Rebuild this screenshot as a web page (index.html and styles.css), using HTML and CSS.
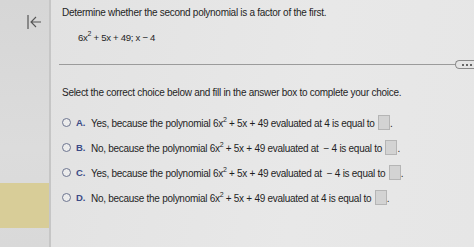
FILE: index.html
```html
<!DOCTYPE html>
<html>
<head>
<meta charset="utf-8">
<link rel="stylesheet" href="styles.css">
</head>
<body>
<div class="page">
  <aside class="side">
    <div class="back">
      <svg width="16" height="16" viewBox="0 0 16 16"><path d="M2 1V15" stroke="#555" stroke-width="1.2" fill="none"/><path d="M15 8H5M10 3L5 8L10 13" stroke="#555" stroke-width="1.1" fill="none"/></svg>
    </div>
    <div class="hl"></div>
  </aside>
  <main class="main">
    <p class="q">Determine whether the second polynomial is a factor of the first.</p>
    <p class="poly">6x<sup>2</sup> + 5x + 49; x − 4</p>
    <div class="rule"><span class="line"></span><span class="pill"><i></i><i></i><i></i></span></div>
    <p class="sel">Select the correct choice below and fill in the answer box to complete your choice.</p>
    <ul class="opts">
      <li><span class="radio"></span><b>A.</b><span class="txt">Yes, because the polynomial 6x<sup>2</sup> + 5x + 49 evaluated at 4 is equal to <span class="box"></span>.</span></li>
      <li><span class="radio"></span><b>B.</b><span class="txt">No, because the polynomial 6x<sup>2</sup> + 5x + 49 evaluated at &nbsp;− 4 is equal to <span class="box"></span>.</span></li>
      <li><span class="radio"></span><b>C.</b><span class="txt">Yes, because the polynomial 6x<sup>2</sup> + 5x + 49 evaluated at &nbsp;− 4 is equal to <span class="box"></span>.</span></li>
      <li><span class="radio"></span><b>D.</b><span class="txt">No, because the polynomial 6x<sup>2</sup> + 5x + 49 evaluated at 4 is equal to <span class="box"></span>.</span></li>
    </ul>
  </main>
</div>
</body>
</html>
```
FILE: styles.css
```css
html, body { margin: 0; padding: 0; }
body {
  width: 474px; height: 247px; overflow: hidden;
  font-family: "Liberation Sans", Arial, sans-serif;
  color: #1f1f1f;
  background: #e3e3e3;
}
.page { display: flex; height: 247px; }
.side {
  width: 49px; flex: none;
  background: linear-gradient(180deg, #d6d6d6, #dcdcdc 60%, #d9d9d9);
  border-right: 2px solid #c6c6c6;
  display: flex; flex-direction: column;
}
.back { padding: 14px 0 0 26px; height: 17px; }
.hl { margin-top: 152px; height: 45px; background: #d8cd98; }
.main {
  flex: 1;
  background: linear-gradient(100deg, #e2e2e2, #e8e8e8 60%, #e6e6e6);
  padding: 6px 0 0 11px;
  letter-spacing: -0.28px;
}
p { margin: 0; }
.q { font-size: 10px; line-height: 13px; }
.poly { font-size: 9.6px; margin: 12px 0 0 16px; line-height: 13px; letter-spacing: -0.3px; }
sup { font-size: 7px; vertical-align: 5px; line-height: 0; }
.rule { display: flex; align-items: center; margin: 16px 0 0 -3px; }
.line { flex: 1; height: 1px; background: #9b9b9b; }
.pill {
  width: 16px; height: 7px; border: 1px solid #8a8a8a; border-right: none;
  border-radius: 5px 0 0 5px; background: #e4e4e4;
  display: flex; align-items: center; justify-content: flex-end; gap: 2px; padding-right: 2px;
}
.pill i { width: 2px; height: 2px; background: #666; display: block; }
.sel { font-size: 10px; margin-top: 17px; line-height: 13px; }
.opts { list-style: none; margin: 11px 0 0 0; padding: 0; }
.opts li { display: flex; align-items: center; height: 25px; font-size: 10px; }
.radio {
  width: 7px; height: 7px; border: 1px solid #6d7590; border-radius: 50%;
  flex: none; margin-right: 5px; background: #ececec;
}
.opts b { color: #3a4a86; font-size: 9.5px; width: 15px; flex: none; letter-spacing: 0; }
.txt { white-space: nowrap; }
.box {
  display: inline-block; width: 10px; height: 13px; vertical-align: -3px;
  background: #d3d3d3; border: 1px solid #b5b5b5; margin-left: 1px;
}
```
